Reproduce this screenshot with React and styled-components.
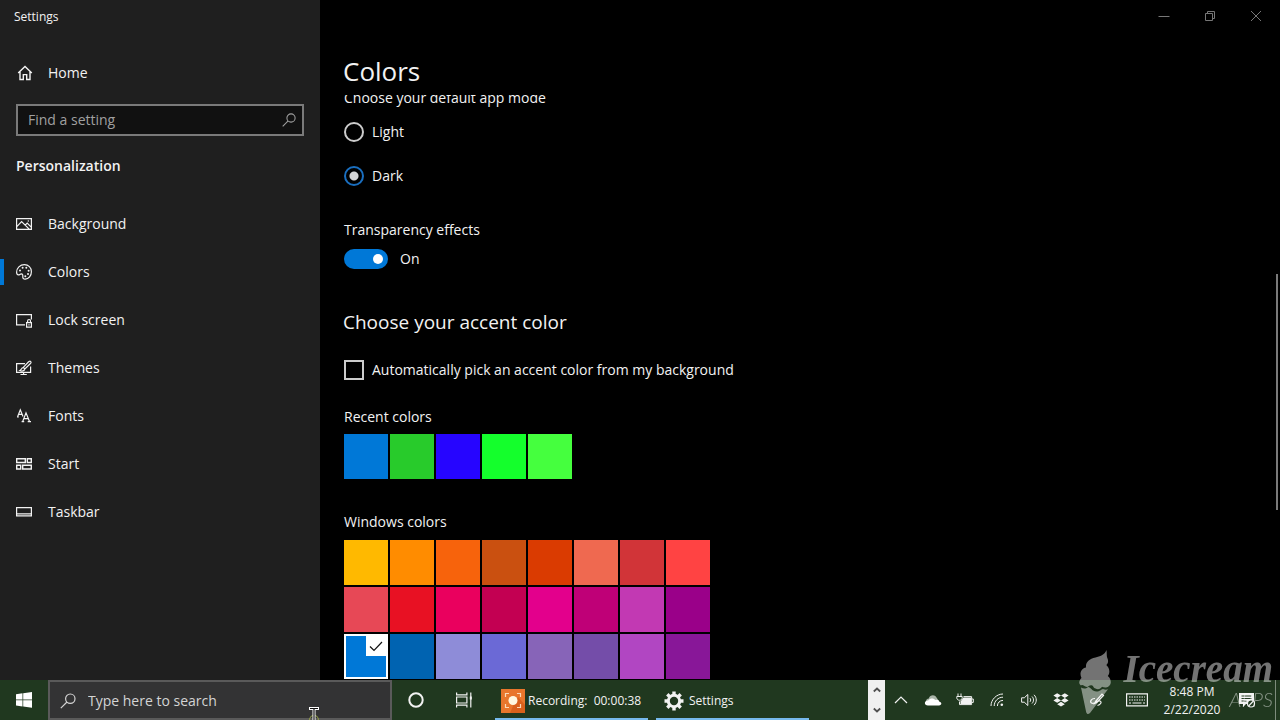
import { useState } from 'react';
import styled, { createGlobalStyle } from 'styled-components';

const GlobalStyle = createGlobalStyle`
  * {
    box-sizing: border-box;
  }

  body {
    margin: 0;
    background: #000;
    color: #f2f2f2;
    font-family: 'Open Sans', 'Noto Sans', sans-serif;
    font-size: 14px;
    line-height: 20px;
    overflow: hidden;
  }

  button,
  input {
    margin: 0;
    font: inherit;
    color: inherit;
  }

  button {
    padding: 0;
    border: 0;
    background: none;
  }
`;

const Desktop = styled.div`
  display: flex;
  flex-direction: column;
  height: 100vh;
`;

const SettingsWindow = styled.div`
  display: flex;
  flex: 1;
  min-height: 0;
`;

const Icon = styled.svg`
  display: block;
  flex: none;
  width: ${({ $w }) => $w || 16}px;
  height: ${({ $h }) => $h || 16}px;
  fill: none;
  stroke: currentColor;
  stroke-width: 1.2;
`;

/* ---------- sidebar ---------- */

const Sidebar = styled.aside`
  flex: 0 0 25%;
  min-width: 240px;
  background: #1f1f1f;
`;

const WindowTitle = styled.div`
  padding: 0 14px;
  font-size: 12px;
  line-height: 34px;
`;

const NavLink = styled.a`
  display: flex;
  align-items: center;
  gap: 16px;
  height: 48px;
  padding-left: 12px;
  border-left: 4px solid ${({ $active }) => ($active ? '#0078d7' : 'transparent')};
  border-image: ${({ $active }) =>
    $active ? 'linear-gradient(transparent 25%, #0078d7 25%, #0078d7 75%, transparent 75%) 1 / 0 0 0 4px' : 'none'};
  color: inherit;
  text-decoration: none;
`;

const HomeLink = styled(NavLink)`
  gap: 15px;
  margin-top: 15px;
  padding-left: 13px;
`;

const SearchField = styled.label`
  display: flex;
  align-items: center;
  height: 32px;
  margin: 7px 16px 20px;
  padding: 0 6px 0 10px;
  border: 2px solid #7a7a7a;
  background: #111;
  color: #a0a0a0;
`;

const TextInput = styled.input`
  flex: 1;
  min-width: 0;
  padding: 0;
  border: 0;
  outline: 0;
  background: none;

  &::placeholder {
    color: inherit;
    opacity: 1;
  }
`;

const SidebarHeading = styled.h2`
  margin: 0 16px 24px;
  font-size: 14px;
  font-weight: 600;
  line-height: 20px;
`;

/* ---------- content ---------- */

const Content = styled.main`
  display: flex;
  flex: 1;
  flex-direction: column;
  min-width: 0;
  background: #000;
`;

const WindowControls = styled.div`
  display: flex;
  justify-content: flex-end;
  padding-right: 1px;
  color: #777;
`;

const WindowButton = styled.button`
  display: flex;
  align-items: center;
  justify-content: center;
  width: 46px;
  height: 32px;
`;

const PageTitle = styled.h1`
  margin: 23px 23px 8px;
  font-size: 26px;
  font-weight: 400;
  line-height: 32px;
`;

const ScrollArea = styled.div`
  display: flex;
  flex: 1;
  min-height: 0;
  overflow: hidden;
`;

const Form = styled.div`
  flex: 1;
  margin-top: -7px;
  padding-left: 24px;
`;

const ScrollThumb = styled.div`
  width: 2px;
  height: 236px;
  margin: 179px 2px 0 0;
  background: #7a7a7a;
`;

const Fieldset = styled.fieldset`
  display: flex;
  flex-direction: column;
  gap: 24px;
  margin: 0 0 34px;
  padding: 0;
  border: 0;
`;

const Legend = styled.legend`
  margin-bottom: 14px;
  padding: 0;
`;

const Option = styled.label`
  display: flex;
  align-items: center;
  gap: ${({ $gap }) => $gap || 8}px;
  height: 20px;
`;

const Radio = styled.input`
  appearance: none;
  width: 20px;
  height: 20px;
  border: 2px solid #ccc;
  border-radius: 50%;

  &:checked {
    border-color: #1a6fc0;
    background: radial-gradient(circle, #d4d4d4 4px, transparent 5px);
  }
`;

const Switch = styled.input`
  appearance: none;
  display: flex;
  align-items: center;
  width: 44px;
  height: 20px;
  padding: 0 5px;
  border-radius: 10px;
  background: #555;

  &::before {
    content: '';
    width: 10px;
    height: 10px;
    border-radius: 50%;
    background: #fff;
  }

  &:checked {
    justify-content: flex-end;
    background: #0078d7;
  }
`;

const Checkbox = styled.input`
  appearance: none;
  width: 20px;
  height: 20px;
  border: 2px solid #ccc;

  &:checked {
    background: #0078d7;
  }
`;

const FieldName = styled.div`
  margin-bottom: 9px;
`;

const SectionTitle = styled.h2`
  margin: 39px 0 24px -1px;
  font-size: 19px;
  font-weight: 400;
  line-height: 28px;
`;

const SwatchGroup = styled.section`
  margin-top: ${({ $top }) => $top}px;
`;

const SwatchName = styled.h3`
  margin: 0 0 ${({ $space }) => $space}px;
  font-size: 14px;
  font-weight: 400;
  line-height: 20px;
`;

const SwatchGrid = styled.div`
  display: grid;
  grid-template-columns: repeat(8, 44px);
  gap: 2px;
`;

const Swatch = styled.button`
  display: flex;
  align-items: flex-start;
  justify-content: flex-end;
  height: 45px;
  border: ${({ $selected }) => ($selected ? '2px solid #fff' : '0')};
  background: ${({ $color }) => $color};
`;

const SwatchCheck = styled.span`
  padding: 2px;
  background: #fff;
  color: #111;
`;

/* ---------- taskbar ---------- */

const Taskbar = styled.footer`
  display: flex;
  flex: none;
  height: 40px;
  background: #20381f;
`;

const TaskButton = styled.button`
  display: flex;
  flex: none;
  align-items: center;
  justify-content: center;
  width: ${({ $w }) => $w || 48}px;
`;

const TaskSearch = styled.label`
  display: flex;
  flex: 0 1 344px;
  align-items: center;
  gap: 12px;
  padding: 2px 0 0 10px;
  border: 2px solid #5a5a5a;
  background: #333334;
  color: #d4d4d4;
`;

const RunningApps = styled.div`
  display: flex;
  gap: 8px;
  margin: 0 auto 0 7px;
`;

const AppButton = styled.button`
  display: flex;
  align-items: center;
  gap: 3px;
  width: 153px;
  padding: 3px 6px 0;
  border-bottom: 2px solid #76b9ed;
  font-size: 12px;
  white-space: pre;
`;

const Tray = styled.div`
  display: flex;
`;

const TrayScroller = styled.div`
  display: flex;
  flex-direction: column;
  width: 17px;
  background: #f0f0f0;
  color: #505050;
`;

const ScrollerButton = styled.button`
  display: flex;
  flex: 1;
  align-items: center;
  justify-content: center;
`;

const Clock = styled.time`
  width: 70px;
  padding-top: 3px;
  font-size: 12px;
  line-height: 18px;
  text-align: center;
`;

const ShowDesktop = styled.button`
  width: 5px;
  margin-left: 8px;
  border-left: 1px solid #7d8c7c;
`;

/* ---------- overlays ---------- */

const Watermark = styled.div`
  position: fixed;
  right: 7px;
  bottom: 5px;
  display: flex;
  align-items: flex-start;
  gap: 12px;
  color: #fff;
  opacity: 0.45;
  pointer-events: none;
`;

const WatermarkText = styled.div`
  display: flex;
  flex-direction: column;
  align-items: flex-end;
`;

const Brand = styled.span`
  font: italic bold 39px/40px 'Liberation Serif', serif;
`;

const BrandSub = styled.span`
  font: italic 300 20px/20px Lato, sans-serif;
`;

const Pointer = styled.div`
  position: fixed;
  bottom: 0;
  left: 308px;
  pointer-events: none;
`;

const HomeIcon = () => (
  <Icon viewBox="0 0 16 16">
    <path d="M1.2 8 8 1.5 14.8 8M3 6.5v8h3.3V9.6h3.4v4.9H13v-8" strokeWidth="1.4" />
  </Icon>
);

const SearchIcon = ({ size = 14 }) => (
  <Icon viewBox="0 0 16 16" $w={size} $h={size}>
    <circle cx="10.3" cy="5.7" r="4.7" />
    <path d="M7 9 .8 15.2" />
  </Icon>
);

const BackgroundIcon = () => (
  <Icon viewBox="0 0 16 16">
    <path d="M.6 2.6h14.8v10.8H.6zM.8 10.6 5.6 5.5l7.6 7.7M9.2 9.2l2-2 4 4" />
    <circle cx="12.3" cy="5" r=".7" fill="currentColor" stroke="none" />
  </Icon>
);

const ColorsIcon = () => (
  <Icon viewBox="0 0 16 16">
    <path d="M8.4.7c4 0 7 3 7 7s-2.7 7.5-6.2 7.5c-2 0-2.5-1.2-2.4-2.5.1-1.6-.1-2.8-1.5-2.8-1.3 0-1.6 1-2.8 1C1.2 10.9.6 9.8.6 8.3.6 4 4 .7 8.4.7z" />
    <g fill="currentColor" stroke="none">
      <circle cx="4" cy="6.6" r="1" />
      <circle cx="6.6" cy="3.8" r="1" />
      <circle cx="10.3" cy="3.8" r="1" />
      <circle cx="12.6" cy="6.8" r="1" />
      <circle cx="12" cy="10" r="1" />
      <circle cx="9.3" cy="12.2" r="1" />
    </g>
  </Icon>
);

const LockScreenIcon = () => (
  <Icon viewBox="0 0 16 16">
    <path d="M9 12.8H.6V2.6h14.8v5M10.6 10.6h4.8v4.6h-4.8zM11.6 10.4V9c0-2 2.9-2 2.9 0v1.4M13 12.2v1.4" />
  </Icon>
);

const ThemesIcon = () => (
  <Icon viewBox="0 0 16 16">
    <path d="M9 3.6H.6v8.8h14V6.5M4.5 14.5h6.3M7.6 12.4v2" />
    <path d="M14.7 1.6c-.8-.8-1.6-.3-2.3.4L7.3 7.4l1.6 1.6 5.3-5.2c.8-.8 1.2-1.5.5-2.2zM7.2 7.6c-2.2.2-1.4 2.2-3.4 2.9 2 1 4.6.6 5-1.4" />
  </Icon>
);

const FontsIcon = () => (
  <Icon viewBox="0 0 16 16">
    <path d="M1.5 9 4.3 1.8 7 8.5M2.5 6.3h3.6M1 9h1.8M5.6 13.7h2.6M11.7 13.7H15M6.7 13.5 10 4.8l3.5 8.7M8 10.6h4.3" />
  </Icon>
);

const StartIcon = () => (
  <Icon viewBox="0 0 16 16">
    <path d="M.7 2.7h8.6v3.8H.7zM11.3 2.7h4v3.8h-4zM.7 9.2h4V13h-4zM6.7 9.2h8.6V13H6.7z" strokeWidth="1.4" />
  </Icon>
);

const TaskbarIcon = () => (
  <Icon viewBox="0 0 16 16">
    <path d="M.6 3.6h14.8v8.2H.6zM.6 9.9h14.8" />
  </Icon>
);

const navItems = [
  { name: 'Background', icon: BackgroundIcon },
  { name: 'Colors', icon: ColorsIcon },
  { name: 'Lock screen', icon: LockScreenIcon },
  { name: 'Themes', icon: ThemesIcon },
  { name: 'Fonts', icon: FontsIcon },
  { name: 'Start', icon: StartIcon },
  { name: 'Taskbar', icon: TaskbarIcon },
];

const recentColors = ['#0078d7', '#28cb2b', '#2605ff', '#14ff2c', '#45ff3e'];

const windowsColors = [
  '#ffb900', '#ff8c00', '#f7630c', '#ca5010', '#da3b01', '#ef6950', '#d13438', '#ff4343',
  '#e74856', '#e81123', '#ea005e', '#c30052', '#e3008c', '#bf0077', '#c239b3', '#9a0089',
  '#0078d7', '#0063b1', '#8e8cd8', '#6b69d6', '#8764b8', '#744da9', '#b146c2', '#881798',
];

const SettingsSidebar = () => (
  <Sidebar>
    <WindowTitle>Settings</WindowTitle>
    <HomeLink href="#home">
      <HomeIcon />
      <span>Home</span>
    </HomeLink>
    <SearchField>
      <TextInput type="text" placeholder="Find a setting" aria-label="Find a setting" />
      <SearchIcon />
    </SearchField>
    <SidebarHeading>Personalization</SidebarHeading>
    <nav>
      {navItems.map(({ name, icon: NavIcon }) => (
        <NavLink key={name} href={`#${name}`} $active={name === 'Colors'}>
          <NavIcon />
          <span>{name}</span>
        </NavLink>
      ))}
    </nav>
  </Sidebar>
);

const ColorsPage = () => {
  const [mode, setMode] = useState('Dark');
  const [transparent, setTransparent] = useState(true);
  const [accent, setAccent] = useState('#0078d7');

  return (
    <Content>
      <WindowControls>
        <WindowButton aria-label="Minimize">
          <Icon viewBox="0 0 12 12" $w={12} $h={12}>
            <path d="M.5 6.5h11" strokeWidth="1" />
          </Icon>
        </WindowButton>
        <WindowButton aria-label="Restore">
          <Icon viewBox="0 0 12 12" $w={12} $h={12}>
            <path d="M1.5 3.5h7v7h-7zM3.5 3.5v-2h7v7h-2" strokeWidth="1" />
          </Icon>
        </WindowButton>
        <WindowButton aria-label="Close">
          <Icon viewBox="0 0 12 12" $w={12} $h={12}>
            <path d="m1 1 10 10M11 1 1 11" strokeWidth="1" />
          </Icon>
        </WindowButton>
      </WindowControls>
      <PageTitle>Colors</PageTitle>
      <ScrollArea>
        <Form>
          <Fieldset>
            <Legend>Choose your default app mode</Legend>
            {['Light', 'Dark'].map((name) => (
              <Option key={name}>
                <Radio type="radio" name="mode" checked={mode === name} onChange={() => setMode(name)} />
                {name}
              </Option>
            ))}
          </Fieldset>
          <FieldName id="transparency">Transparency effects</FieldName>
          <Option $gap={12}>
            <Switch
              type="checkbox"
              role="switch"
              aria-labelledby="transparency"
              checked={transparent}
              onChange={() => setTransparent(!transparent)}
            />
            {transparent ? 'On' : 'Off'}
          </Option>
          <SectionTitle>Choose your accent color</SectionTitle>
          <Option>
            <Checkbox type="checkbox" />
            Automatically pick an accent color from my background
          </Option>
          <SwatchGroup $top={27}>
            <SwatchName $space={7}>Recent colors</SwatchName>
            <SwatchGrid>
              {recentColors.map((color) => (
                <Swatch key={color} $color={color} aria-label={color} onClick={() => setAccent(color)} />
              ))}
            </SwatchGrid>
          </SwatchGroup>
          <SwatchGroup $top={33}>
            <SwatchName $space={8}>Windows colors</SwatchName>
            <SwatchGrid>
              {windowsColors.map((color) => (
                <Swatch
                  key={color}
                  $color={color}
                  $selected={color === accent}
                  aria-label={color}
                  onClick={() => setAccent(color)}
                >
                  {color === accent && (
                    <SwatchCheck>
                      <Icon viewBox="0 0 16 16">
                        <path d="m2 8.5 4 4L14 4" />
                      </Icon>
                    </SwatchCheck>
                  )}
                </Swatch>
              ))}
            </SwatchGrid>
          </SwatchGroup>
        </Form>
        <ScrollThumb />
      </ScrollArea>
    </Content>
  );
};

const RunningTasks = () => (
  <RunningApps>
    <AppButton>
      <Icon viewBox="0 0 24 24" $w={24} $h={24}>
        <path d="M0 0h24v24H0z" fill="#e8762c" stroke="none" />
        <path d="m12 17 5-9 7 8v8H9z" fill="#d9601c" stroke="none" />
        <circle cx="12" cy="11.5" r="4.5" fill="#fff8e0" stroke="none" />
        <path d="M4.5 8V4.5H8M16 4.5h3.5V8M19.5 15v3.5H16M8 18.5H4.5V15" stroke="#fbd9b8" />
      </Icon>
      <span>Recording:  00:00:38</span>
    </AppButton>
    <AppButton>
      <Icon viewBox="0 0 24 24" $w={24} $h={24}>
        <circle cx="12" cy="12" r="5.7" strokeWidth="3" />
        <path
          d="M12 2.5v4M12 17.5v4M2.5 12h4M17.5 12h4M5.3 5.3l2.8 2.8M15.9 15.9l2.8 2.8M5.3 18.7l2.8-2.8M15.9 8.1l2.8-2.8"
          strokeWidth="3.4"
        />
      </Icon>
      <span>Settings</span>
    </AppButton>
  </RunningApps>
);

const SystemTray = () => (
  <Tray>
    <TrayScroller>
      <ScrollerButton aria-label="Scroll up">
        <Icon viewBox="0 0 8 8" $w={8} $h={8}>
          <path d="m.8 5.5 3.2-3 3.2 3" strokeWidth="1.8" />
        </Icon>
      </ScrollerButton>
      <ScrollerButton aria-label="Scroll down">
        <Icon viewBox="0 0 8 8" $w={8} $h={8}>
          <path d="m.8 2.5 3.2 3 3.2-3" strokeWidth="1.8" />
        </Icon>
      </ScrollerButton>
    </TrayScroller>
    <TaskButton $w={32} aria-label="Show hidden icons">
      <Icon viewBox="0 0 16 16">
        <path d="m2 11 6-6 6 6" />
      </Icon>
    </TaskButton>
    <TaskButton $w={32} aria-label="OneDrive">
      <Icon viewBox="0 0 18 16" $w={18}>
        <g stroke="none">
          <path d="M2 9.5C2 7.5 3.4 6.5 4.8 6.4 5.8 3 10.5 1.8 12.5 5.5l2 3L6 12z" fill="#aab5a9" />
          <path d="M4 13.6c-4.2 0-4.2-5.2.2-5.2 2-2.5 5.4-2.6 7.3-.4 2-.8 3.7.4 3.9 1.8 2.8.3 2.4 3.8-.4 3.8z" fill="#fff" />
        </g>
      </Icon>
    </TaskButton>
    <TaskButton $w={32} aria-label="Battery">
      <Icon viewBox="0 0 18 16" $w={18}>
        <path
          d="M7.5 4.6h8.1v8H3.5V9.5M15.8 7h1.5v3.4h-1.5M2 1.5v3M5 1.5v3M.8 4.5h5.4v1.3c0 3.3-5.4 3.3-5.4 0z"
          strokeWidth="1"
        />
        <path d="M7.5 5.5H15V12H4.5V9.5z" fill="currentColor" stroke="none" />
      </Icon>
    </TaskButton>
    <TaskButton $w={32} aria-label="Network">
      <Icon viewBox="0 0 16 16">
        <path
          d="M2 14C2 7.5 7.5 2 14 2M5.2 14c0-4.9 3.9-8.8 8.8-8.8M8.4 14c0-3.2 2.4-5.6 5.6-5.6"
          strokeWidth="1"
        />
        <circle cx="12.8" cy="12.8" r="1.3" fill="currentColor" stroke="none" />
      </Icon>
    </TaskButton>
    <TaskButton $w={32} aria-label="Volume">
      <Icon viewBox="0 0 16 16">
        <path
          d="M.6 5.8h2.7l3.5-3.3v11l-3.5-3.3H.6zM9 6.2c.9 1 .9 2.6 0 3.6M11 4.5c2 2 2 5 0 7M13 2.8c3 3 3 7.4 0 10.4"
          strokeWidth="1"
        />
      </Icon>
    </TaskButton>
    <TaskButton $w={32} aria-label="Dropbox">
      <Icon viewBox="0 0 16 16">
        <path
          d="m4.2 1.2 3.8 2.4L4.2 6 .4 3.6zM11.8 1.2l3.8 2.4L11.8 6 8 3.6zM4.2 6 8 8.4l-3.8 2.4L.4 8.4zM11.8 6l3.8 2.4-3.8 2.4L8 8.4zM8 9.8l3.8 2.4L8 14.6l-3.8-2.4z"
          fill="currentColor"
          stroke="none"
        />
      </Icon>
    </TaskButton>
    <TaskButton $w={40} aria-label="Windows Ink">
      <Icon viewBox="0 0 16 16">
        <path d="M6.5 9.5 13 2.2l1.5 1.4-6.8 7-2.2.9zM6 6.5C2.5 6.2.5 9.5 2.5 11c3 2 6-3 8.5-2 2.5 1.2 0 4-2.5 4.5" />
      </Icon>
    </TaskButton>
    <TaskButton $w={40} aria-label="Touch keyboard">
      <Icon viewBox="0 0 22 14" $w={22} $h={14}>
        <path d="M.6.9h20.8v12H.6z" />
        <path d="M3 4h16M3 7h16" strokeDasharray="1.5 1" />
        <path d="M3 10h2M6.5 10h9M17 10h2" />
      </Icon>
    </TaskButton>
    <Clock>
      8:48 PM
      <br />
      2/22/2020
    </Clock>
    <TaskButton $w={40} aria-label="Notifications">
      <Icon viewBox="0 0 18 18" $w={18} $h={18}>
        <path d="M1 2h15v11H8l-3 3v-3H1z" fill="currentColor" stroke="none" />
        <path d="M3.5 5h10M3.5 7.5h10M3.5 10h5" stroke="#20381f" />
        <circle cx="13" cy="12.5" r="3.5" fill="#20381f" />
        <path d="m10.6 15 4.8-5" />
      </Icon>
    </TaskButton>
    <ShowDesktop aria-label="Show desktop" />
  </Tray>
);

const App = () => (
  <>
    <GlobalStyle />
    <Desktop>
      <SettingsWindow>
        <SettingsSidebar />
        <ColorsPage />
      </SettingsWindow>
      <Taskbar>
        <TaskButton aria-label="Start">
          <Icon viewBox="0 0 16 16">
            <path
              d="M0 2.2l6.5-.9v6.2H0zM7.2 1.2 16 0v7.5H7.2zM0 8.2h6.5v6.2L0 13.5zM7.2 8.2H16v7.6l-8.8-1.2z"
              fill="#fff"
              stroke="none"
            />
          </Icon>
        </TaskButton>
        <TaskSearch>
          <SearchIcon size={16} />
          <TextInput type="text" placeholder="Type here to search" aria-label="Type here to search" />
        </TaskSearch>
        <TaskButton aria-label="Cortana">
          <Icon viewBox="0 0 16 16">
            <circle cx="8" cy="8" r="6.7" strokeWidth="2" />
          </Icon>
        </TaskButton>
        <TaskButton aria-label="Task view">
          <Icon viewBox="0 0 16 16">
            <path d="M.6.5v2.4h10.3V.5M.6 5h10.3v6H.6zM.6 15.5v-2.4h10.3v2.4M14.8.5v15" />
            <path d="M13.8 4.5h2v3h-2z" fill="currentColor" stroke="none" />
          </Icon>
        </TaskButton>
        <RunningTasks />
        <SystemTray />
      </Taskbar>
    </Desktop>
    <Watermark>
      <Icon viewBox="0 0 34 66" $w={34} $h={66}>
        <g fill="currentColor" stroke="none">
          <path d="M28.5 1c.5 4.5 0 6 1 8.5 1.2 2.5.5 5-1.2 6.5 3.5 3 4 8 1.5 11 3.5 3 4.2 8 .7 10.5-2.5 1.8-4.5 1-6.5.3-1.5 2.2-4 3.2-6.5 1.7-2 0-2-3-4-3.2-2.7-.3-3 2.2-5.5 1.5-2-.6-3-2.7-5-1.3C-.5 34 2 30.5 3.5 29c-2.5-5 0-9.5 4.5-10.5C7.5 13 11 10 17.5 8.500 22 7.5 26.5 6 28.5 1z" />
          <path d="M3 38.5c2.5 1.5 5 1.5 7-.5 3 .3 4 4.5 8.5 4.5 3.5 0 4.5-2 6.5-2.5 2 .8 3.5.8 5 .3L12 64c-2 1.5-3 1.2-3.8-.8z" />
        </g>
      </Icon>
      <WatermarkText>
        <Brand>Icecream</Brand>
        <BrandSub>APPS</BrandSub>
      </WatermarkText>
    </Watermark>
    <Pointer>
      <Icon viewBox="0 0 12 14" $w={12} $h={14}>
        <circle cx="6" cy="14" r="4.5" stroke="#8f9a4a" />
        <path d="M1 2.5h10M6 2.5V14" stroke="#fff" strokeWidth="3" />
        <path d="M2 2.5h8M6 2.5V14" stroke="#111" />
      </Icon>
    </Pointer>
  </>
);

export default App;
